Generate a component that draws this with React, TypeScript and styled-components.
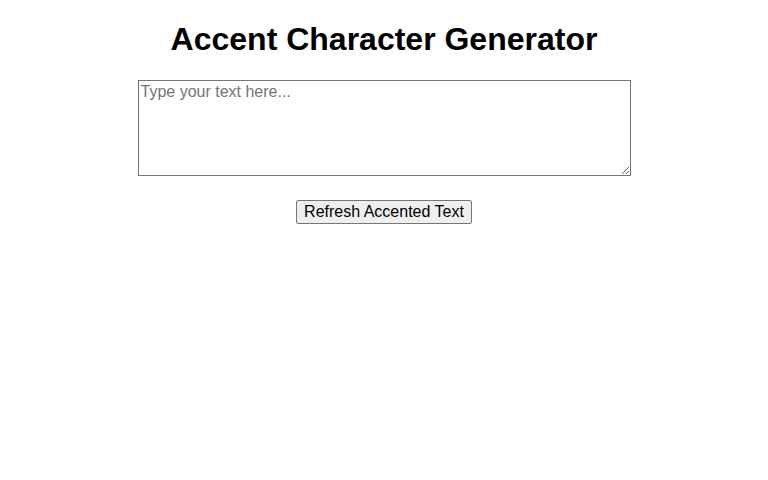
import * as React from "react";
import styled, { createGlobalStyle } from "styled-components";

const GlobalStyle = createGlobalStyle`
  body {
    margin: 0;
    background: #ffffff;
    font-family: "Liberation Sans", Arial, sans-serif;
    color: #000000;
  }
`;

const Wrapper = styled.div`
  display: flex;
  flex-direction: column;
  align-items: center;
  padding-top: 21px;
`;

const Title = styled.h1`
  margin: 0 0 22px;
  font-size: 32px;
  line-height: 37px;
  font-weight: bold;
`;

const TextInput = styled.textarea`
  box-sizing: border-box;
  width: 493px;
  height: 96px;
  margin: 0 0 24px;
  padding: 2px;
  border: 1px solid #767676;
  font-family: "Liberation Sans", Arial, sans-serif;
  font-size: 16px;
  line-height: 18px;
  resize: vertical;

  &::placeholder {
    color: #757575;
  }
`;

const Button = styled.button`
  box-sizing: border-box;
  height: 24px;
  padding: 1px 7px;
  font-family: "Liberation Sans", Arial, sans-serif;
  font-size: 16px;
  color: #000000;
  background: #efefef;
  border: 1px solid #767676;
  border-radius: 2px;
  cursor: pointer;
`;

const App = () => {
  const [text, setText] = React.useState("");

  return (
    <Wrapper>
      <GlobalStyle />
      <Title>Accent Character Generator</Title>
      <TextInput
        placeholder="Type your text here..."
        value={text}
        onChange={(e) => setText(e.target.value)}
      />
      <Button>Refresh Accented Text</Button>
    </Wrapper>
  );
};

export default App;
